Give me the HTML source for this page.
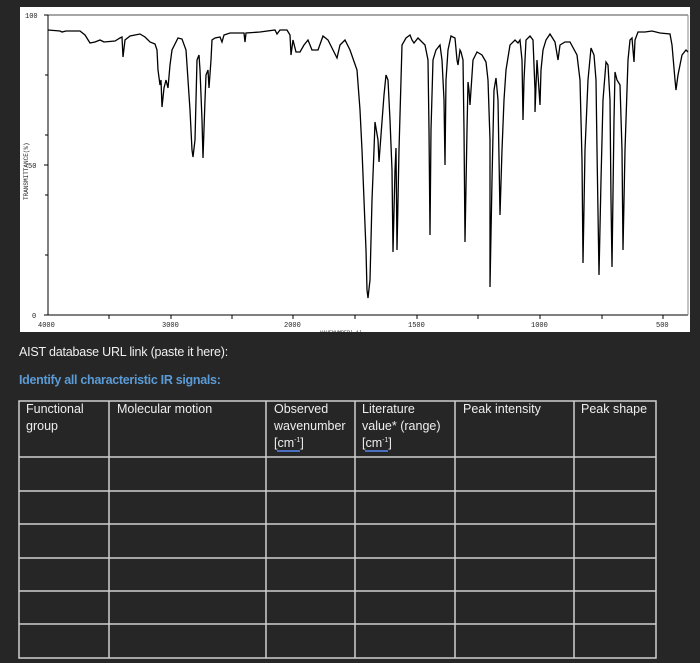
<!DOCTYPE html>
<html><head><meta charset="utf-8"><style>
html,body{margin:0;padding:0;background:#262626;width:700px;height:663px;overflow:hidden;font-family:"Liberation Sans",sans-serif;}
.t1{position:absolute;left:19px;top:345px;color:#f0f0f0;font-size:12.5px;letter-spacing:-0.2px;}
.t2{position:absolute;left:19px;top:373px;color:#5b9bd5;font-size:12.5px;font-weight:bold;letter-spacing:-0.3px;}
.c{position:absolute;color:#eee;font-size:12.5px;line-height:17px;}
.u{border-bottom:2px solid #4a6fc0;}
sup{font-size:7px;line-height:0;vertical-align:5px;}
</style></head><body>
<svg width="700" height="340" style="position:absolute;left:0;top:0">
<rect x="20" y="7" width="670" height="325" fill="#fff"/>
<line x1="48" y1="15" x2="688" y2="15" stroke="#888" stroke-width="1.5"/>
<line x1="48" y1="15" x2="48" y2="315" stroke="#000"/>
<line x1="48" y1="315" x2="688" y2="315" stroke="#000"/>
<line x1="688" y1="15" x2="688" y2="315" stroke="#888"/>
<g stroke="#000" stroke-width="1">
<line x1="44" y1="15" x2="48" y2="15"/><line x1="44" y1="165" x2="48" y2="165"/><line x1="44" y1="315" x2="48" y2="315"/>
<line x1="45" y1="75" x2="48" y2="75"/><line x1="45" y1="135" x2="48" y2="135"/><line x1="45" y1="195" x2="48" y2="195"/><line x1="45" y1="255" x2="48" y2="255"/>
<line x1="109" y1="315" x2="109" y2="319"/><line x1="171" y1="315" x2="171" y2="319"/><line x1="232" y1="315" x2="232" y2="319"/><line x1="293" y1="315" x2="293" y2="319"/><line x1="355" y1="315" x2="355" y2="319"/><line x1="417" y1="315" x2="417" y2="319"/><line x1="478" y1="315" x2="478" y2="319"/><line x1="540" y1="315" x2="540" y2="319"/><line x1="602" y1="315" x2="602" y2="319"/><line x1="663" y1="315" x2="663" y2="319"/>
</g>
<g font-family="Liberation Mono,monospace" font-size="7" fill="#222">
<text x="25" y="18">100</text><text x="28" y="168">50</text><text x="32" y="318">0</text>
<text x="38" y="327">4000</text><text x="162" y="327">3000</text><text x="284" y="327">2000</text><text x="408" y="327">1500</text><text x="531" y="327">1000</text><text x="656" y="327">500</text>
<text x="320" y="334" font-size="5">WAVENUMBER(-1)</text>
<text transform="translate(28,200) rotate(-90)" font-size="6">TRANSMITTANCE(%)</text>
</g>
<polyline fill="none" stroke="#000" stroke-width="1.3" points="48,30 60,31 62,32 66,31 80,31 85,35 90,43 95,42 100,40 104,42 115,41 120,38 122,37 123,57 125,40 130,36 140,34 145,37 150,42 155,44 157,50 158,70 160,85 161,80 162,107 164,88 166,80 168,88 170,65 172,50 178,38 182,39 186,50 188,80 190,110 192,150 193,157 195,140 196,100 197,60 199,55 200,70 202,120 203,158 205,100 206,75 208,70 209,88 211,60 212,40 215,38 220,37 222,42 224,35 230,33 244,33 245,42 246,33 260,32 275,30 277,34 280,30 287,30 290,35 291,55 293,40 296,52 300,52 304,45 308,40 312,50 318,50 323,36 328,40 333,50 337,58 340,45 345,40 350,50 357,70 360,110 362,150 364,200 366,250 367,290 368,298 370,280 372,200 374,150 375,122 378,140 379,162 381,135 384,95 386,75 388,80 390,120 392,170 393,252 395,170 396,148 397,250 399,150 401,80 402,45 406,38 410,35 412,40 414,43 418,38 425,45 428,60 429,130 430,235 431,130 433,60 436,50 440,45 442,60 444,100 445,165 446,80 448,50 451,36 455,38 457,60 458,65 460,50 461,52 463,60 464,130 465,242 467,130 468,82 469,90 470,105 471,90 473,60 477,52 482,55 486,62 488,80 490,140 490,287 492,180 494,90 496,78 498,100 500,215 502,150 504,100 506,70 510,45 515,40 518,43 520,40 522,60 523,120 524,80 526,40 530,36 533,40 535,90 535,112 537,60 538,75 540,105 541,70 543,50 546,40 550,34 555,42 558,60 560,45 565,42 570,42 577,55 580,80 582,160 583,263 585,150 588,80 591,48 594,55 596,80 597,150 599,275 601,180 603,100 606,62 608,65 610,100 611,200 612,267 614,120 615,72 617,80 620,85 622,150 623,250 625,150 628,60 630,40 632,38 634,62 635,40 638,32 645,32 652,31 660,33 670,34 672,45 675,80 676,90 678,75 682,55 686,50 688,52"/>
</svg>
<div class="t1">AIST database URL link (paste it here):</div>
<div class="t2">Identify all characteristic IR signals:</div>
<svg width="700" height="663" style="position:absolute;left:0;top:0">
<g stroke="#cfcfcf" stroke-width="1.5" fill="none">
<rect x="19" y="401" width="637" height="257"/>
<line x1="109" y1="401" x2="109" y2="658"/><line x1="266" y1="401" x2="266" y2="658"/><line x1="355" y1="401" x2="355" y2="658"/><line x1="455" y1="401" x2="455" y2="658"/><line x1="574" y1="401" x2="574" y2="658"/>
<line x1="19" y1="457" x2="656" y2="457"/><line x1="19" y1="491" x2="656" y2="491"/><line x1="19" y1="524" x2="656" y2="524"/><line x1="19" y1="558" x2="656" y2="558"/><line x1="19" y1="591" x2="656" y2="591"/><line x1="19" y1="624" x2="656" y2="624"/>
</g></svg>
<div class="c" style="left:26px;top:401px">Functional<br>group</div>
<div class="c" style="left:117px;top:401px">Molecular motion</div>
<div class="c" style="left:274px;top:401px">Observed<br>wavenumber<br>[<span class="u">cm<sup>-1</sup></span>]</div>
<div class="c" style="left:362px;top:401px">Literature<br>value* (range)<br>[<span class="u">cm<sup>-1</sup></span>]</div>
<div class="c" style="left:463px;top:401px">Peak intensity</div>
<div class="c" style="left:581px;top:401px">Peak shape</div>
</body></html>
